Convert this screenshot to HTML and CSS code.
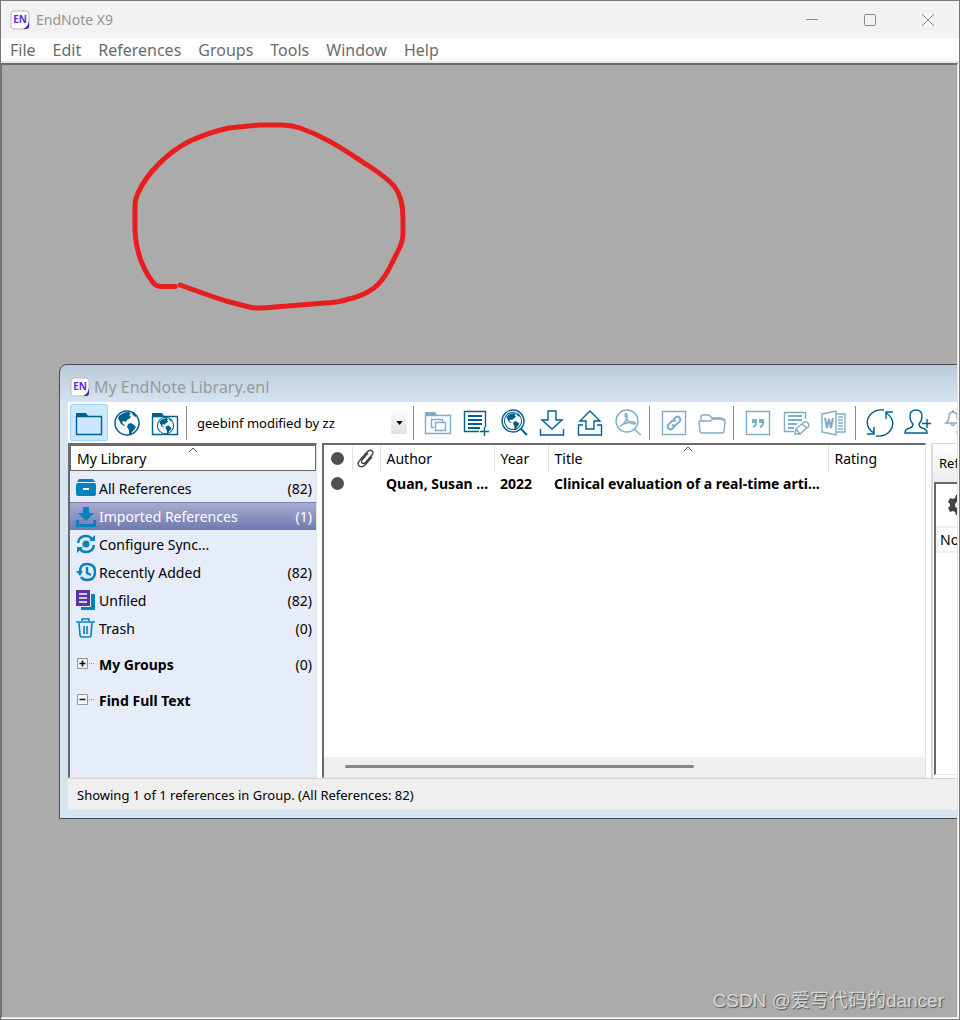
FILE: index.html
```html
<!DOCTYPE html>
<html lang="en">
<head>
    <meta charset="UTF-8">
    <meta name="viewport" content="width=device-width, initial-scale=1.0">
    <title>EndNote X9</title>
    <link rel="stylesheet" href="styles.css">
</head>
<body>
    <!-- Shared symbols -->
    <svg class="symbols" aria-hidden="true">
        <symbol id="logo" viewBox="0 0 20 20">
            <rect x="1" y="1" width="18" height="18" rx="3" fill="#fff" stroke="#bbb"/>
            <path d="M19 11v5q0 3-3 3h-3q5-2 6-8z" fill="#4b1fb0"/>
        </symbol>
        <symbol id="globe" viewBox="0 0 28 28">
            <circle cx="14" cy="14" r="12" fill="#fff" stroke="#005f8c" stroke-width="1.500"/>
            <path d="M6 7q4-4 10-4l2 2-2 1 2 2-2 2-2 1-1 2-2-1-2 1 1 2 2 1-1 1-3-2-2-4-1-2zM15 15l3-1 3 2 2 2-2 3-2 2-1 3-2-1v-4l-2-3zM18 3l3 1 3 3-2 1-2-2z" fill="#005f8c" stroke="none"/>
        </symbol>
    </svg>

    <div class="app">
        <header class="app-title">
            <span class="logo"><svg><use href="#logo"/></svg><b>EN</b></span>
            <h1>EndNote X9</h1>
            <div class="window-buttons">
                <button aria-label="Minimize"><svg viewBox="0 0 14 14"><path d="M1 6.500h12"/></svg></button>
                <button aria-label="Maximize"><svg viewBox="0 0 14 14"><rect x="1.500" y="1.500" width="11" height="11" rx="1"/></svg></button>
                <button aria-label="Close"><svg viewBox="0 0 14 14"><path d="M1 1l12 12M13 1 1 13"/></svg></button>
            </div>
        </header>
        <nav class="menu">
            <button>File</button>
            <button>Edit</button>
            <button>References</button>
            <button>Groups</button>
            <button>Tools</button>
            <button>Window</button>
            <button>Help</button>
        </nav>

        <main class="workspace">
            <!-- Red pen mark -->
            <svg class="pen-mark" viewBox="0 0 300 210">
                <path d="M55 176.500H42q-6 0-9-4C22 158 16 140 15 121V95q0-6 3-12C27 63 48 42 70 31q20-9 39-13l30-3h22q10 0 19 3c26 9 44 22 69 38q18 12 25 20 9 11 9 32v15q0 8-4 16l-9 18q-7 14-16 21-11 8-25 11-13 4-24 4l-50 4q-18 2-26 0l-23-6-18-6-28-10"/>
            </svg>

            <section class="library">
                <div class="library-title">
                    <span class="logo"><svg><use href="#logo"/></svg><b>EN</b></span>
                    <h2>My EndNote Library.enl</h2>
                </div>

                <div class="toolbar">
                    <button class="tool active" aria-label="Local Library">
                        <svg viewBox="0 0 28 28"><path d="M1.500 7.500h25v18h-25z"/><path class="solid" d="M1 4h10l2 3H1z"/></svg>
                    </button>
                    <button class="tool" aria-label="Online Search"><svg viewBox="0 0 28 28"><use href="#globe"/></svg></button>
                    <button class="tool" aria-label="Integrated Library">
                        <svg viewBox="0 0 28 28"><path d="M1.500 7.500h25v18h-25z"/><path class="solid" d="M1 4h10l2 3H1z"/><use href="#globe" x="5" y="7" width="19" height="19"/></svg>
                    </button>
                    <span class="divider"></span>
                    <label class="style-picker">
                        <select aria-label="Output style"><option>geebinf modified by zz</option></select>
                        <span class="arrow"><svg viewBox="0 0 8 5"><path d="M0 0h8L4 5z"/></svg></span>
                    </label>
                    <span class="divider"></span>
                    <button class="tool dim" aria-label="Copy to Local Library">
                        <svg viewBox="0 0 28 28"><path d="M1.500 6.500h25v18h-25z"/><path class="solid" d="M1 3h10l2 3H1z"/><path d="M10 18.500H7.500v-8h11V13M11.500 13.500h10v8h-10z"/></svg>
                    </button>
                    <button class="tool" aria-label="New Reference">
                        <svg viewBox="0 0 28 28"><path d="M17 22.500H2.500v-20h21V18"/><path class="heavy" d="M6 7h14M6 11h14M6 15h14M6 19h12"/><path d="M22.500 18v9M18 22.500h9"/></svg>
                    </button>
                    <button class="tool" aria-label="Online Search Dialog">
                        <svg viewBox="0 0 28 28"><circle cx="13" cy="12" r="11"/><use href="#globe" x="3" y="2" width="20" height="20"/><path class="heavy" d="m21 20 6 6"/></svg>
                    </button>
                    <button class="tool" aria-label="Import">
                        <svg viewBox="0 0 28 28"><path d="M10 2h8v9h6L14 20 4 11h6zM2.500 20v6h23v-6"/></svg>
                    </button>
                    <button class="tool" aria-label="Export">
                        <svg viewBox="0 0 28 28"><path d="M10 20h8v-8h6L14 2 4 12h6zM7 16H2.500v10h23V16H21"/></svg>
                    </button>
                    <button class="tool dim" aria-label="Find Full Text">
                        <svg viewBox="0 0 28 28"><circle cx="13" cy="12" r="11"/><path d="m20 20 7 6M6 17c4-1 8-8 7-11s-3-1-1 3 5 6 8 6 0-3-4-2-7 2-10 4z"/></svg>
                    </button>
                    <span class="divider"></span>
                    <button class="tool dim" aria-label="Open Link">
                        <svg viewBox="0 0 28 28"><path d="M2.500 2.500h23v23h-23z"/><path class="heavy" d="m13 11 3-3q2-1 3 0 2 2 1 4l-4 4q-2 1-4 0M15 17l-3 3q-2 1-3 0-2-2-1-4l4-4q2-1 4 0"/></svg>
                    </button>
                    <button class="tool dim" aria-label="Open File">
                        <svg viewBox="0 0 28 28"><path d="M3 12V8q0-2 2-2h6l3 3h9q2 0 2 3M1 14q0-2 2-2h9l3-2h10q2 0 2 3l-1 9q0 2-2 2H4q-2 0-2-2z"/></svg>
                    </button>
                    <span class="divider"></span>
                    <button class="tool dim" aria-label="Insert Citation">
                        <svg viewBox="0 0 28 28"><path d="M2.500 2.500h23v23h-23z"/><path class="solid" d="M8 10h5v4q0 4-4 5v-2q2-1 2-3H8zM15 10h5v4q0 4-4 5v-2q2-1 2-3h-3z"/></svg>
                    </button>
                    <button class="tool dim" aria-label="Format Bibliography">
                        <svg viewBox="0 0 28 28"><path d="M12 22.500H2.500v-19h21V10"/><path class="heavy" d="M6 7h14M6 11h14M6 15h9M6 19h6"/><path d="m13 25 1-5 8-7q2-1 4 1t0 4l-8 7zM14 20l4 5M20 15l5 4"/></svg>
                    </button>
                    <button class="tool dim" aria-label="Go to Word Processor">
                        <svg viewBox="0 0 28 28"><path d="m2 5 14-3v24L2 23zM16 5h9v18h-9"/><path d="M18 8h5M18 11h5M18 14h5M18 17h5M18 20h5"/><path class="heavy" d="m5 9 2 10 2-9 2 9 2-10"/></svg>
                    </button>
                    <span class="divider"></span>
                    <button class="tool" aria-label="Sync Library">
                        <svg viewBox="0 0 28 28"><path d="M8 24C1 20-1 12 4 6q5-6 14-5M20 4c7 4 9 12 4 18q-5 6-14 5M1 25h7v-7M27 3h-7v7"/></svg>
                    </button>
                    <button class="tool" aria-label="Share Library">
                        <svg viewBox="0 0 28 28"><path d="M9 15q-3-3-3-8 0-6 6-6t6 6q0 5-3 8 0 3 3 4 5 1 5 5H1q0-4 5-5 3-1 3-4zM23 10v9M18 14.500h9"/></svg>
                    </button>
                    <button class="tool dim" aria-label="Notifications">
                        <svg viewBox="0 0 28 28"><path d="M4 14q3-2 3-7 0-4 4-4t4 4q0 5 3 7zM10 2h2M9 15q2 3 4 0M14 23h8"/></svg>
                    </button>
                </div>

                <div class="panes">
                    <aside class="groups">
                        <div class="groups-head">My Library
                            <svg class="sort" viewBox="0 0 10 5"><path d="m1 5 4-4 4 4"/></svg>
                        </div>
                        <ul>
                            <li>
                                <svg viewBox="0 0 20 20"><path class="fill" d="M3 1h14l2 3H1zM0 7q0-2 2-2h16q2 0 2 2v9q0 2-2 2H2q-2 0-2-2z"/><path d="M7 11h6" stroke="#fff" stroke-width="2"/></svg>
                                <a href="#">All References</a><span>(82)</span>
                            </li>
                            <li class="selected">
                                <svg viewBox="0 0 20 20"><path class="fill" d="M7 0h6v6h5l-8 8-8-8h5zM0 13h3v4h14v-4h3v7H0z"/></svg>
                                <a href="#">Imported References</a><span>(1)</span>
                            </li>
                            <li>
                                <svg viewBox="0 0 20 20"><circle class="fill" cx="10" cy="10" r="3.500"/><path class="line" d="M2 9q1-7 8-7 4 0 6 3M18 11q-1 7-8 7-4 0-6-3"/><path class="fill" d="M19 1v6h-6zM1 19v-6h6z"/></svg>
                                <a href="#">Configure Sync...</a>
                            </li>
                            <li>
                                <svg viewBox="0 0 20 20"><path class="line" d="M4 10q0-8 7-8 8 0 8 8t-8 8q-4 0-6-3M11 5v6l4 2"/><path class="fill" d="M0 9h7l-3 5z"/></svg>
                                <a href="#">Recently Added</a><span>(82)</span>
                            </li>
                            <li>
                                <svg viewBox="0 0 20 20"><path class="fill" d="M15 4h4v16H5v-3h10z"/><path d="M0 0h14v16H0z" fill="#5b33a5"/><path d="M3 4h8M3 8h8M3 12h8" stroke="#fff" stroke-width="1.500"/></svg>
                                <a href="#">Unfiled</a><span>(82)</span>
                            </li>
                            <li>
                                <svg viewBox="0 0 20 20"><path class="line thin" d="M0 4h19M6 3V1h7v2M3 5l1 12q0 2 2 2h7q2 0 2-2l1-12M8 8v8M11 8v8"/></svg>
                                <a href="#">Trash</a><span>(0)</span>
                            </li>
                            <li class="group">
                                <svg viewBox="0 0 20 20"><path class="box" d="M1.500 4.500h10v10h-10z"/><path class="sign" d="M3.500 9.500h6M6.500 6.500v6"/><path class="dots" d="M13 9.500h6"/></svg>
                                <a href="#">My Groups</a><span>(0)</span>
                            </li>
                            <li class="group">
                                <svg viewBox="0 0 20 20"><path class="box" d="M1.500 4.500h10v10h-10z"/><path class="sign" d="M3.500 9.500h6"/><path class="dots" d="M13 9.500h6"/></svg>
                                <a href="#">Find Full Text</a>
                            </li>
                        </ul>
                    </aside>

                    <div class="references">
                        <table>
                            <colgroup>
                                <col class="col-read"><col class="col-file"><col class="col-author"><col class="col-year"><col class="col-title"><col>
                            </colgroup>
                            <thead>
                                <tr>
                                    <th aria-label="Read status"><i class="dot"></i></th>
                                    <th aria-label="Attachment"><svg class="clip" viewBox="0 0 18 20"><path d="M11 5 5 12q-1 2 0 3t3 0l7-8q2-3 0-4-2-2-5 1l-7 8q-3 3-1 6 3 2 6-1l7-8"/></svg></th>
                                    <th>Author</th>
                                    <th>Year</th>
                                    <th>Title<svg class="sort" viewBox="0 0 10 5"><path d="m1 5 4-4 4 4"/></svg></th>
                                    <th>Rating</th>
                                </tr>
                            </thead>
                            <tbody>
                                <tr>
                                    <td><i class="dot"></i></td>
                                    <td></td>
                                    <td>Quan, Susan ...</td>
                                    <td>2022</td>
                                    <td>Clinical evaluation of a real-time arti...</td>
                                    <td></td>
                                </tr>
                            </tbody>
                        </table>
                        <div class="scrollbar"><div class="thumb"></div></div>
                    </div>

                    <div class="preview">
                        <button class="tab">Ref</button>
                        <div class="preview-body">
                            <button class="gear" aria-label="Settings">
                                <svg viewBox="0 0 20 20"><path fill-rule="evenodd" d="M8 0h4l1 3 2 1 3-1 2 4-2 2v2l2 2-2 4-3-1-2 1-1 3H8l-1-3-2-1-3 1-2-4 2-2V9L0 7l2-4 3 1 2-1zM10 7a3 3 0 1 0 0 6 3 3 0 0 0 0-6z"/></svg>
                            </button>
                            <p>No</p>
                        </div>
                    </div>
                </div>

                <footer class="status">Showing 1 of 1 references in Group. (All References: 82)</footer>
            </section>

            <span class="watermark">CSDN @爱写代码的dancer</span>
        </main>
    </div>
</body>
</html>
```

FILE: styles.css
```css
* {
    box-sizing: border-box;
}

body {
    margin: 0;
    font-family: "Noto Sans", "Open Sans", sans-serif;
    font-size: 14px;
    color: #000;
}

button {
    padding: 0;
    border: none;
    background: none;
    font: inherit;
    color: inherit;
}

a {
    color: inherit;
    text-decoration: none;
}

h1, h2, p, ul {
    margin: 0;
    padding: 0;
    font-weight: normal;
}

svg {
    fill: none;
    display: block;
}

.symbols {
    position: absolute;
    width: 0;
    height: 0;
}

/* Application window */
.app {
    display: flex;
    flex-direction: column;
    min-height: 100vh;
    border: 1px solid #777;
    background: #fff;
}

.app-title {
    display: flex;
    align-items: center;
    height: 37px;
    padding-left: 9px;
    background: #f2f2f2;
    color: #929292;
}

.app-title h1 {
    flex: 1;
    margin-left: 6px;
    font-size: 14px;
}

.logo {
    position: relative;
    width: 20px;
    height: 20px;
}

.logo svg {
    width: 20px;
    height: 20px;
}

.logo b {
    position: absolute;
    top: 0;
    left: 0;
    width: 20px;
    text-align: center;
    font-size: 10px;
    line-height: 18px;
    color: #5a2be0;
}

.window-buttons {
    display: flex;
    margin-right: 2px;
}

.window-buttons button {
    display: flex;
    justify-content: center;
    width: 58px;
}

.window-buttons svg {
    width: 14px;
    height: 14px;
    stroke: #8a8a8a;
}

.menu {
    display: flex;
    gap: 17px;
    height: 25px;
    padding-left: 9px;
    border-bottom: 2px solid #e8e8e8;
    font-size: 16px;
    color: #6b6b6b;
}

.workspace {
    position: relative;
    flex: 1;
    margin-right: 1px;
    margin-bottom: 1px;
    border: 1px solid #e3e3e3;
    border-top: 2px solid #6d6d6d;
    border-left: 1px solid #6d6d6d;
    background: #ababab;
    overflow: hidden;
}

.pen-mark {
    position: absolute;
    top: 45px;
    left: 118px;
    width: 300px;
    height: 210px;
    stroke: #e81e1e;
    stroke-width: 5;
    stroke-linecap: round;
    stroke-linejoin: round;
}

/* Library window */
.library {
    position: absolute;
    top: 299px;
    left: 57px;
    right: -40px;
    padding: 0 8px 8px;
    border: 1px solid #4b4b4b;
    border-radius: 8px 0 0 0;
    background: #d6e4f2;
    background-image: linear-gradient(#bccbdb, #d6e4f2 38px);
}

.library-title {
    display: flex;
    align-items: center;
    height: 37px;
    padding: 7px 0 0 2px;
    color: #999;
}

.library-title h2 {
    margin-left: 4px;
    font-size: 16px;
}

.toolbar {
    display: flex;
    align-items: center;
    height: 41px;
    padding-left: 2px;
    background: #fff;
}

.tool {
    display: flex;
    flex: none;
    align-items: center;
    justify-content: center;
    width: 38px;
    height: 37px;
}

.tool.active {
    border: 1px solid #99d1ff;
    border-radius: 2px;
    background: #cce8ff;
}

.tool > svg {
    width: 28px;
    height: 28px;
    stroke: #005f8c;
    stroke-width: 1.4;
}

.tool .solid {
    fill: #005f8c;
    stroke: none;
}

.tool .heavy {
    stroke-width: 2;
}

.tool.dim > svg {
    opacity: 0.5;
}

.divider {
    flex: none;
    width: 1px;
    height: 34px;
    margin: 0 5px 0 2px;
    background: #888;
}

.style-picker {
    position: relative;
    flex: none;
    width: 219px;
}

.style-picker select {
    width: 100%;
    height: 24px;
    padding: 0 5px;
    border: none;
    background: #fff;
    appearance: none;
    font: inherit;
    font-size: 13px;
    color: #000;
}

.style-picker .arrow {
    position: absolute;
    top: 1px;
    right: 4px;
    display: flex;
    align-items: center;
    justify-content: center;
    width: 16px;
    height: 22px;
    background: linear-gradient(#fafafa, #e2e2e2);
    pointer-events: none;
}

.arrow svg {
    width: 7px;
    height: 4px;
    fill: #000;
}

/* Panes */
.panes {
    display: flex;
    height: 335px;
    background: #fff;
}

.groups {
    flex: none;
    width: 249px;
    margin-right: 5px;
    border: 1px solid #e3e3e3;
    border-top: 2px solid #6a6a6a;
    border-left: 2px solid #6a6a6a;
    background: #e7ecf9;
}

.groups-head {
    position: relative;
    height: 26px;
    margin-bottom: 3px;
    padding-left: 6px;
    border: 1px solid #666;
    background: #fff;
    line-height: 25px;
}

.sort {
    position: absolute;
    top: 1px;
    left: 50%;
    width: 10px;
    height: 5px;
    margin-left: -5px;
    stroke: #555;
}

.groups ul {
    list-style: none;
}

.groups li {
    display: flex;
    align-items: center;
    gap: 3px;
    height: 28px;
    padding: 0 4px 0 6px;
}

.groups li svg {
    width: 20px;
    height: 20px;
}

.groups li a {
    flex: 1;
}

.groups .selected {
    border-top: 1px solid #7480b4;
    background: linear-gradient(#a5add2, #7079ae);
    color: #fff;
}

.groups .fill {
    fill: #0082c0;
}

.groups .line {
    stroke: #0082c0;
    stroke-width: 2.4;
}

.groups .thin {
    stroke-width: 1.6;
}

.groups .group {
    margin-top: 8px;
}

.group a {
    font-weight: bold;
}

.box {
    fill: #f4f4f4;
    stroke: #8996a6;
}

.sign {
    stroke: #111;
    stroke-width: 1.5;
}

.dots {
    stroke: #8996a6;
    stroke-dasharray: 1 1;
}

.references {
    display: flex;
    flex: none;
    flex-direction: column;
    width: 604px;
    margin-right: 5px;
    border: 1px solid #e3e3e3;
    border-top: 2px solid #6a6a6a;
    border-left: 2px solid #6a6a6a;
}

table {
    width: 100%;
    table-layout: fixed;
    border-collapse: collapse;
}

.col-read, .col-file {
    width: 28px;
}

.col-author {
    width: 114px;
}

.col-year {
    width: 54px;
}

.col-title {
    width: 280px;
}

th, td {
    position: relative;
    height: 25px;
    padding: 0 0 0 6px;
    text-align: left;
    white-space: nowrap;
}

th {
    height: 26px;
    border-right: 1px solid #e3e3e3;
    font-weight: normal;
}

th:last-child {
    border-right: none;
}

td {
    font-weight: bold;
}

.dot {
    display: block;
    width: 13px;
    height: 13px;
    margin-left: 1px;
    border-radius: 50%;
    background: #505050;
}

.clip {
    width: 18px;
    height: 20px;
    margin-left: -2px;
    stroke: #444;
    stroke-width: 1.4;
}

.scrollbar {
    height: 20px;
    margin-top: auto;
    padding: 8px 0 0 21px;
    background: #efefef;
}

.thumb {
    width: 349px;
    height: 3px;
    border-radius: 2px;
    background: #858585;
}

.preview {
    display: flex;
    flex: 1;
    flex-direction: column;
    border-left: 2px solid #d9d9d9;
}

.tab {
    height: 39px;
    padding-left: 6px;
    border-top: 1px solid #d9d9d9;
    background: linear-gradient(#fff, #ececec);
    text-align: left;
    font-size: 13px;
}

.preview-body {
    flex: 1;
    margin: 0 0 3px 1px;
    border: 2px solid #6a6a6a;
    border-bottom: 1px solid #e3e3e3;
}

.gear {
    display: block;
    height: 42px;
    padding-left: 12px;
}

.gear svg {
    width: 20px;
    height: 20px;
    fill: #444;
}

.preview-body p {
    padding-left: 2px;
    border: 2px solid #f0f0f0;
    line-height: 23px;
}

.status {
    height: 32px;
    padding-left: 9px;
    border-top: 1px solid #d4d4d4;
    background: #efefef;
    font-size: 13px;
    line-height: 32px;
}

.watermark {
    position: absolute;
    right: 13px;
    bottom: 5px;
    font-family: "Liberation Sans", "Noto Sans CJK SC", sans-serif;
    font-size: 19px;
    color: #d8d8d8;
    text-shadow: 1px 1px 1px #555;
}
```
